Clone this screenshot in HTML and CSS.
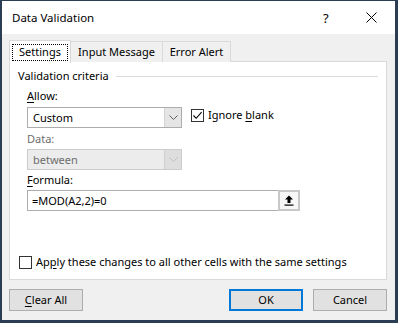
FILE: index.html
```
<!DOCTYPE html>
<html>
<head>
<meta charset="utf-8">
<link rel="stylesheet" href="styles.css">
</head>
<body>
<div class="window">
  <div class="titlebar">
    <span class="title">Data Validation</span>
    <span class="help">?</span>
    <span class="close">
      <svg width="11" height="11" viewBox="0 0 11 11"><path d="M0.5 0.5 L10.5 10.5 M10.5 0.5 L0.5 10.5" stroke="#000" stroke-width="1" fill="none"/></svg>
    </span>
  </div>
  <div class="body">
    <div class="tabs">
      <div class="tab active"><span class="focus">Settings</span></div>
      <div class="tab t2">Input Message</div>
      <div class="tab t3">Error Alert</div>
    </div>
    <div class="panel">
      <div class="group-head">
        <span>Validation criteria</span>
        <span class="rule"></span>
      </div>
      <div class="label"><u>A</u>llow:</div>
      <div class="row">
        <div class="select">
          <span class="value">Custom</span>
          <span class="drop"><svg width="9" height="5" viewBox="0 0 9 5"><path d="M0.5 0.5 L4.5 4.5 L8.5 0.5" stroke="#606060" fill="none"/></svg></span>
        </div>
        <label class="check">
          <span class="box"><svg width="11" height="11" viewBox="0 0 11 11"><path d="M1.5 5.5 L4.2 8.3 L9.6 2.2" stroke="#000" stroke-width="1.1" fill="none"/></svg></span>
          <span>Ignore <u>b</u>lank</span>
        </label>
      </div>
      <div class="label disabled">Data:</div>
      <div class="select off">
        <span class="value">between</span>
        <span class="drop"><svg width="9" height="5" viewBox="0 0 9 5"><path d="M0.5 0.5 L4.5 4.5 L8.5 0.5" stroke="#bfbfbf" fill="none"/></svg></span>
      </div>
      <div class="label flabel"><u>F</u>ormula:</div>
      <div class="formula">
        <span class="value">=MOD(A2,2)=0</span>
        <span class="pick"><svg width="10" height="11" viewBox="0 0 10 11"><path d="M5 0.5 L9 4.5 L6.5 4.5 L6.5 8 L3.5 8 L3.5 4.5 L1 4.5 Z" fill="#000"/><rect x="0.5" y="9.5" width="9" height="1.2" fill="#000"/></svg></span>
      </div>
      <div class="spacer"></div>
      <label class="check apply">
        <span class="box"></span>
        <span>Ap<u>p</u>ly these changes to all other cells with the same settings</span>
      </label>
    </div>
    <div class="footer">
      <button class="btn"><u>C</u>lear All</button>
      <span class="grow"></span>
      <button class="btn default">OK</button>
      <button class="btn">Cancel</button>
    </div>
  </div>
</div>
</body>
</html>
```

FILE: styles.css
```
* { box-sizing: border-box; }
html, body { margin: 0; padding: 0; }
body {
  font-family: "Noto Sans", "Open Sans", sans-serif;
  font-size: 11px;
  line-height: 16px;
  color: #000;
  background: #2b3d52;
}
.window {
  width: 398px;
  height: 323px;
  border-style: solid;
  border-color: #2b3d52;
  border-width: 1px 3px 3px 2px;
  display: flex;
  flex-direction: column;
  background: #f0f0f0;
}
.titlebar {
  height: 33px;
  background: #fff;
  display: flex;
  align-items: center;
  padding-left: 10px;
  flex: none;
}
.title { flex: 1; padding-top: 1px; font-size: 11.5px; }
.help { width: 12px; margin-right: 31px; font-size: 13px; padding-top: 1px; }
.close { width: 11px; height: 11px; margin-right: 18px; display: flex; }
.body {
  flex: 1;
  display: flex;
  flex-direction: column;
  padding: 6px 8px 0 7px;
}
.tabs {
  display: flex;
  align-items: flex-end;
  height: 22px;
  position: relative;
  z-index: 1;
  margin-bottom: -1px;
}
.tab {
  height: 21px;
  border: 1px solid #d9d9d9;
  border-bottom: none;
  background: #f0f0f0;
  padding-top: 2px;
  text-align: center;
  margin-left: -1px;
}
.t2 { width: 93px; }
.t3 { width: 69px; }
.tab.active {
  width: 62px;
  margin-left: 0;
  height: 23px;
  background: #fff;
  padding: 4px 3px 0 3px;
  margin-bottom: -1px;
  position: relative;
  z-index: 2;
}
.focus {
  display: block;
  outline: 1px dotted #000;
  outline-offset: 0;
  height: 15px;
  line-height: 14px;
}
.panel {
  height: 219px;
  border: 1px solid #d9d9d9;
  background: #fff;
  padding: 6px 8px 0 8px;
  display: flex;
  flex-direction: column;
  flex: none;
}
.group-head {
  display: flex;
  align-items: center;
}
.rule {
  flex: 1;
  height: 1px;
  background: #dcdcdc;
  margin: 0 0 0 7px;
}
.label { margin: 4px 0 0 9px; height: 16px; }
.label u, .check u, .btn u { text-decoration-thickness: 1px; text-underline-offset: 2px; }
.label.disabled { color: #6d6d6d; margin-top: 3px; }
.row { display: flex; align-items: flex-start; margin-top: 3px; }
.select {
  margin-left: 9px;
  width: 155px;
  height: 21px;
  border: 1px solid #adadad;
  background: #fff;
  display: flex;
  align-items: stretch;
}
.select .value { flex: 1; padding: 2px 0 0 5px; }
.select .drop {
  width: 17px;
  background: #e5e5e5;
  border-left: 1px solid #d4d4d4;
  display: flex;
  align-items: center;
  justify-content: center;
}
.select.off {
  margin-top: 2px;
  background: #ececec;
  border-color: #cccccc;
  color: #6d6d6d;
}
.select.off .drop { background: #dedede; border-left-color: #d0d0d0; }
.check { display: flex; align-items: center; }
.row .check { margin: 0 0 0 9px; }
.box {
  width: 13px;
  height: 13px;
  border: 1px solid #333;
  background: #fff;
  display: flex;
  align-items: center;
  justify-content: center;
  margin-right: 4px;
  flex: none;
}
.flabel { margin-top: 2px; }
.formula {
  margin: 2px 0 0 9px;
  width: 273px;
  height: 21px;
  border: 1px solid #adadad;
  display: flex;
}
.formula .value { flex: 1; padding: 2px 0 0 4px; }
.pick {
  width: 22px;
  margin: -1px -1px -1px 0;
  border: 2px solid #c8c8c8;
  background: #f7f7f7;
  display: flex;
  align-items: center;
  justify-content: center;
}
.spacer { flex: 1; }
.apply { margin: 0 0 9px 1px; }
.apply .box { margin-right: 4px; }
.footer {
  display: flex;
  margin-top: 9px;
}
.grow { flex: 1; }
.btn {
  font: inherit;
  width: 74px;
  height: 22px;
  border: 1px solid #adadad;
  background: #e1e1e1;
  color: #000;
  padding: 0;
  margin: 0;
}
.btn.default { border: 2px solid #0078d7; margin-right: 10px; }
```
